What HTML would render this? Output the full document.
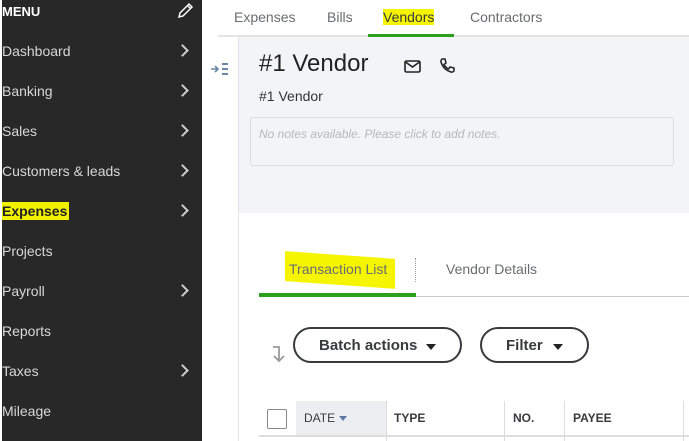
<!DOCTYPE html>
<html><head><style>
*{margin:0;padding:0;box-sizing:border-box}
body{width:689px;height:441px;overflow:hidden;background:#fff;font-family:"Liberation Sans",sans-serif;position:relative}
.sb{position:absolute;left:2px;top:0;width:200px;height:441px;background:#282828;color:#d8d8d8}
.it{position:absolute;left:0;font-size:14px;line-height:18px}
.ch{position:absolute;left:176px;width:9px;height:9px;border-right:2px solid #ccc;border-top:2px solid #ccc;transform:rotate(45deg)}
.a{position:absolute}
</style></head><body>
<div class="sb">
<div class="it" style="top:3px;color:#fff;font-weight:bold;font-size:13px">MENU</div>
<svg class="a" style="left:174px;top:2px" width="18" height="18" viewBox="0 0 18 18"><path d="M3 15l1-4L13 2l3 3-9 9z M11.5 3.5l3 3" fill="none" stroke="#fff" stroke-width="1.5"/></svg>
<div class="it" style="top:42px">Dashboard</div><div class="ch" style="top:46px"></div>
<div class="it" style="top:82px">Banking</div><div class="ch" style="top:86px"></div>
<div class="it" style="top:122px">Sales</div><div class="ch" style="top:126px"></div>
<div class="it" style="top:162px">Customers &amp; leads</div><div class="ch" style="top:166px"></div>
<div class="it" style="top:202px;color:#222;background:#f0f000;font-weight:bold;padding-right:2px">Expenses</div><div class="ch" style="top:206px"></div>
<div class="it" style="top:242px">Projects</div>
<div class="it" style="top:282px">Payroll</div><div class="ch" style="top:286px"></div>
<div class="it" style="top:322px">Reports</div>
<div class="it" style="top:362px">Taxes</div><div class="ch" style="top:366px"></div>
<div class="it" style="top:402px">Mileage</div>
</div>
<div class="a" style="left:218px;top:35px;width:471px;height:2px;background:#e4e4e4"></div>
<div class="a" style="left:234px;top:9px;font-size:14px;color:#6b6c72">Expenses</div>
<div class="a" style="left:327px;top:9px;font-size:14px;color:#6b6c72">Bills</div>
<div class="a" style="left:383px;top:9px;font-size:14px;color:#393a3d;background:#f5f500">Vendors</div>
<div class="a" style="left:368px;top:34px;width:86px;height:3px;background:#2ca01c"></div>
<div class="a" style="left:470px;top:9px;font-size:14px;color:#6b6c72">Contractors</div>
<div class="a" style="left:238px;top:37px;width:1px;height:404px;background:#dfe3ea"></div>
<svg class="a" style="left:210px;top:62px" width="22" height="14" viewBox="0 0 22 14"><path d="M1 7h7M5 4l3 3-3 3" fill="none" stroke="#6a87a8" stroke-width="1.6"/><path d="M12 2h6M12 7h6M12 12h6" stroke="#6a87a8" stroke-width="2"/></svg>
<div class="a" style="left:239px;top:37px;width:450px;height:176px;background:#f3f4f7"></div>
<div class="a" style="left:259px;top:50px;font-size:24px;color:#222">#1 Vendor</div>
<svg class="a" style="left:403px;top:58px" width="20" height="16" viewBox="0 0 20 16"><rect x="2" y="3" width="15" height="11" rx="1.5" fill="none" stroke="#222" stroke-width="1.6"/><path d="M2.5 4l7 5 7-5" fill="none" stroke="#222" stroke-width="1.6"/></svg>
<svg class="a" style="left:438px;top:57px" width="18" height="18" viewBox="0 0 18 18"><path d="M4 2l3 0 1 4-2 1.5c1 2 2.5 3.5 4.5 4.5L12 10l4 1v3c-1 1-2 1.5-3 1C8 13.5 4.5 10 3 5 2.7 4 3 3 4 2z" fill="none" stroke="#222" stroke-width="1.5"/></svg>
<div class="a" style="left:259px;top:88px;font-size:14px;color:#333">#1 Vendor</div>
<div class="a" style="left:250px;top:117px;width:424px;height:49px;border:1.5px solid #dcdcdc;border-radius:3px;background:#f3f4f7"></div>
<div class="a" style="left:259px;top:127px;font-size:12px;font-style:italic;color:#b8b8bc">No notes available. Please click to add notes.</div>
<div class="a" style="left:285px;top:255px;width:110px;height:30px;background:#f5f500;transform:skewY(4deg)"></div>
<div class="a" style="left:289px;top:261px;font-size:14px;color:#6b6c72">Transaction List</div>
<div class="a" style="left:415px;top:258px;height:24px;border-left:1px dotted #999"></div>
<div class="a" style="left:446px;top:261px;font-size:14px;color:#6b6c72">Vendor Details</div>
<div class="a" style="left:259px;top:296px;width:430px;height:1px;background:#ccc"></div>
<div class="a" style="left:259px;top:293px;width:157px;height:4px;background:#2ca01c"></div>
<svg class="a" style="left:270px;top:345px" width="16" height="18" viewBox="0 0 16 18"><path d="M3 2h6v13M4 11l5 5 5-5" fill="none" stroke="#999" stroke-width="1.8"/></svg>
<div class="a" style="left:293px;top:327px;width:169px;height:36px;border:2px solid #393a3d;border-radius:18px"></div>
<div class="a" style="left:319px;top:337px;font-size:15px;font-weight:bold;color:#393a3d">Batch actions</div>
<div class="a" style="left:426px;top:344px;border-left:5px solid transparent;border-right:5px solid transparent;border-top:6px solid #222"></div>
<div class="a" style="left:480px;top:327px;width:109px;height:36px;border:2px solid #393a3d;border-radius:18px"></div>
<div class="a" style="left:506px;top:337px;font-size:15px;font-weight:bold;color:#393a3d">Filter</div>
<div class="a" style="left:553px;top:344px;border-left:5px solid transparent;border-right:5px solid transparent;border-top:6px solid #222"></div>
<div class="a" style="left:296px;top:401px;width:90px;height:35px;background:#eceef1"></div>
<div class="a" style="left:267px;top:409px;width:20px;height:20px;border:1px solid #888;border-radius:2px;background:#fff"></div>
<div class="a" style="left:386px;top:401px;width:1px;height:40px;background:#ddd"></div>
<div class="a" style="left:504px;top:401px;width:1px;height:40px;background:#ddd"></div>
<div class="a" style="left:564px;top:401px;width:1px;height:40px;background:#ddd"></div>
<div class="a" style="left:683px;top:401px;width:1px;height:40px;background:#ddd"></div>
<div class="a" style="left:304px;top:411px;font-size:12px;color:#393a3d">DATE</div>
<div class="a" style="left:339px;top:416px;border-left:4px solid transparent;border-right:4px solid transparent;border-top:5px solid #5a7aa0"></div>
<div class="a" style="left:394px;top:411px;font-size:12px;font-weight:bold;color:#393a3d">TYPE</div>
<div class="a" style="left:513px;top:411px;font-size:12px;font-weight:bold;color:#393a3d">NO.</div>
<div class="a" style="left:573px;top:411px;font-size:12px;font-weight:bold;color:#393a3d">PAYEE</div>
<div class="a" style="left:259px;top:435px;width:430px;height:2px;background:#ddd"></div>
</body></html>
